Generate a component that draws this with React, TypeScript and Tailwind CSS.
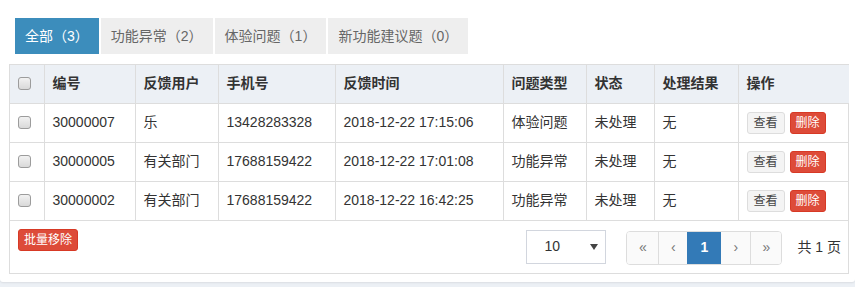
const tabs = [
  { label: "全部（3）", active: true },
  { label: "功能异常（2）", active: false },
  { label: "体验问题（1）", active: false },
  { label: "新功能建议题（0）", active: false },
];

const cols = [34, 91, 83, 117, 168, 83, 68, 84, 111];
const heads = ["编号", "反馈用户", "手机号", "反馈时间", "问题类型", "状态", "处理结果", "操作"];

const rows = [
  ["30000007", "乐", "13428283328", "2018-12-22 17:15:06", "体验问题", "未处理", "无"],
  ["30000005", "有关部门", "17688159422", "2018-12-22 17:01:08", "功能异常", "未处理", "无"],
  ["30000002", "有关部门", "17688159422", "2018-12-22 16:42:25", "功能异常", "未处理", "无"],
];

function Check() {
  return (
    <div className="h-[13px] w-[13px] rounded-[3px] border border-[#9c9c9c] bg-gradient-to-b from-[#f2f2f2] to-[#d9d9d9]" />
  );
}

export default function App() {
  return (
    <div
      className="h-[287px] w-[855px] bg-[#ecf0f5] text-[14px] text-[#333]"
      style={{ fontFamily: '"Liberation Sans", "Noto Sans CJK SC", sans-serif' }}
    >
      <div className="h-[282px] rounded-b-[3px] bg-white px-[9px] pt-[18px] shadow-[0_1px_2px_rgba(0,0,0,0.08)]">
        <div className="ml-[6px] flex gap-[2px]">
          {tabs.map((t) => (
            <div
              key={t.label}
              className={
                t.active
                  ? "flex h-[36px] items-center bg-[#3c8dbc] px-[10px] text-white"
                  : "flex h-[36px] items-center bg-[#eeeeee] px-[10px] text-[#666]"
              }
            >
              {t.label}
            </div>
          ))}
        </div>

        <div className="mt-[10px] w-[840px] border border-[#dddddd]">
          <table className="w-full table-fixed border-collapse">
            <colgroup>
              {cols.map((w, i) => (
                <col key={i} style={{ width: w }} />
              ))}
            </colgroup>
            <thead>
              <tr className="h-[38px] bg-[#ecf0f5]">
                <th className="border-r border-b border-[#dddddd] pl-[8px] text-left">
                  <Check />
                </th>
                {heads.map((h, i) => (
                  <th
                    key={h}
                    className={
                      i === heads.length - 1
                        ? "border-b border-[#dddddd] pl-[8px] text-left font-bold"
                        : "border-r border-b border-[#dddddd] pl-[8px] text-left font-bold"
                    }
                  >
                    {h}
                  </th>
                ))}
              </tr>
            </thead>
            <tbody>
              {rows.map((r) => (
                <tr key={r[0] + r[3]} className="h-[39px]">
                  <td className="border-r border-b border-[#dddddd] pl-[8px]">
                    <Check />
                  </td>
                  {r.map((c, i) => (
                    <td key={i} className="border-r border-b border-[#dddddd] pl-[8px]">
                      {c}
                    </td>
                  ))}
                  <td className="border-b border-[#dddddd] pl-[8px]">
                    <div className="flex gap-[5px]">
                      <span className="flex h-[22px] w-[38px] items-center justify-center rounded-[3px] border border-[#dddddd] bg-[#f4f4f4] text-[12px] text-[#444]">
                        查看
                      </span>
                      <span className="flex h-[22px] w-[36px] items-center justify-center rounded-[3px] border border-[#d73925] bg-[#dd4b39] text-[12px] text-white">
                        删除
                      </span>
                    </div>
                  </td>
                </tr>
              ))}
            </tbody>
          </table>

          <div className="flex h-[52px] items-start justify-between pl-[8px] pr-[7px] pt-[8px]">
            <span className="flex h-[22px] w-[60px] items-center justify-center rounded-[3px] border border-[#d73925] bg-[#dd4b39] text-[12px] text-white">
              批量移除
            </span>
            <div className="flex items-center">
              <div className="flex h-[34px] w-[80px] items-center justify-between border border-[#d2d6de] pl-[17px] pr-[7px]">
                <span>10</span>
                <svg width="8" height="6" viewBox="0 0 8 6">
                  <path d="M0 0h8L4 6z" fill="#444" />
                </svg>
              </div>
              <div className="ml-[20px] mt-[2px] flex h-[34px] overflow-hidden rounded-[4px] border border-[#dddddd] text-[#777]">
                <span className="flex w-[31px] items-center justify-center bg-[#fafafa]">«</span>
                <span className="flex w-[29px] items-center justify-center border-l border-[#dddddd] bg-[#fafafa]">‹</span>
                <span className="flex w-[34px] items-center justify-center bg-[#337ab7] font-bold text-white">1</span>
                <span className="flex w-[29px] items-center justify-center bg-[#fafafa]">›</span>
                <span className="flex w-[31px] items-center justify-center border-l border-[#dddddd] bg-[#fafafa]">»</span>
              </div>
              <span className="ml-[15px] mt-[2px] text-[#333]">共 1 页</span>
            </div>
          </div>
        </div>
      </div>
    </div>
  );
}
